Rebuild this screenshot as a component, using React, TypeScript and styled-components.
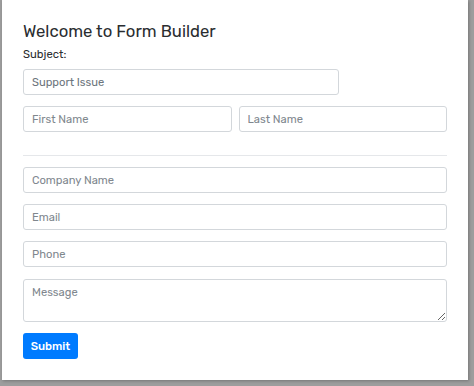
import styled, { createGlobalStyle } from 'styled-components';

const GlobalStyle = createGlobalStyle`
  html, body {
    margin: 0;
    padding: 0;
    background: #9d9d9d;
  }
  body {
    font-family: Rubik, Inter, "Open Sans", Arial, sans-serif;
  }
`;

export default function App() {
  return (
    <Page>
      <GlobalStyle />
      <Panel>
        <Title>Welcome to Form Builder</Title>
        <Label>Subject:</Label>
        <Field $width="316px" defaultValue="Support Issue" />
        <NameRow>
          <Field placeholder="First Name" />
          <Field placeholder="Last Name" />
        </NameRow>
        <Divider />
        <Field placeholder="Company Name" />
        <Field placeholder="Email" />
        <Field placeholder="Phone" />
        <Message placeholder="Message" />
        <SubmitButton type="button">Submit</SubmitButton>
      </Panel>
    </Page>
  );
}

const Page = styled.div`
  width: 474px;
  height: 386px;
  padding-left: 2px;
  box-sizing: border-box;
`;

const Panel = styled.div`
  width: 466px;
  height: 380px;
  background: #fff;
  box-shadow: 1px 1px 3px rgba(0, 0, 0, 0.25);
  padding: 20px 21px 0 21px;
  box-sizing: border-box;
  display: flex;
  flex-direction: column;
  gap: 11px;
`;

const Title = styled.h1`
  margin: 0;
  font-size: 16.7px;
  font-weight: 400;
  color: #2a2d30;
  line-height: 22px;
`;

const Label = styled.div`
  margin-top: -7px;
  margin-bottom: -4px;
  font-size: 11.3px;
  color: #2a2d30;
  line-height: 16px;
`;

const Field = styled.input<{ $width?: string }>`
  width: ${(p) => p.$width ?? '100%'};
  height: 26px;
  box-sizing: border-box;
  border: 1px solid #d3d7db;
  border-radius: 3px;
  padding: 0 8px;
  font-family: inherit;
  font-size: 11.2px;
  color: #6c757d;
  background: #fff;
  outline: none;

  &::placeholder {
    color: #80878e;
  }
`;

const NameRow = styled.div`
  display: grid;
  grid-template-columns: 1fr 1fr;
  gap: 7px;
`;

const Divider = styled.hr`
  margin: 12px 0 0 0;
  border: 0;
  border-top: 1px solid #e5e7ea;
`;

const Message = styled.textarea`
  width: 100%;
  height: 43px;
  box-sizing: border-box;
  border: 1px solid #d3d7db;
  border-radius: 3px;
  padding: 5px 8px;
  font-family: inherit;
  font-size: 11.2px;
  line-height: 16px;
  margin-top: 1px;
  outline: none;

  &::placeholder {
    color: #80878e;
  }
`;

const SubmitButton = styled.button`
  align-self: flex-start;
  width: 55px;
  height: 26px;
  border: 0;
  border-radius: 3px;
  background: #007bff;
  color: #fff;
  font-family: inherit;
  font-size: 11.4px;
  font-weight: 500;
  padding: 0;
`;
